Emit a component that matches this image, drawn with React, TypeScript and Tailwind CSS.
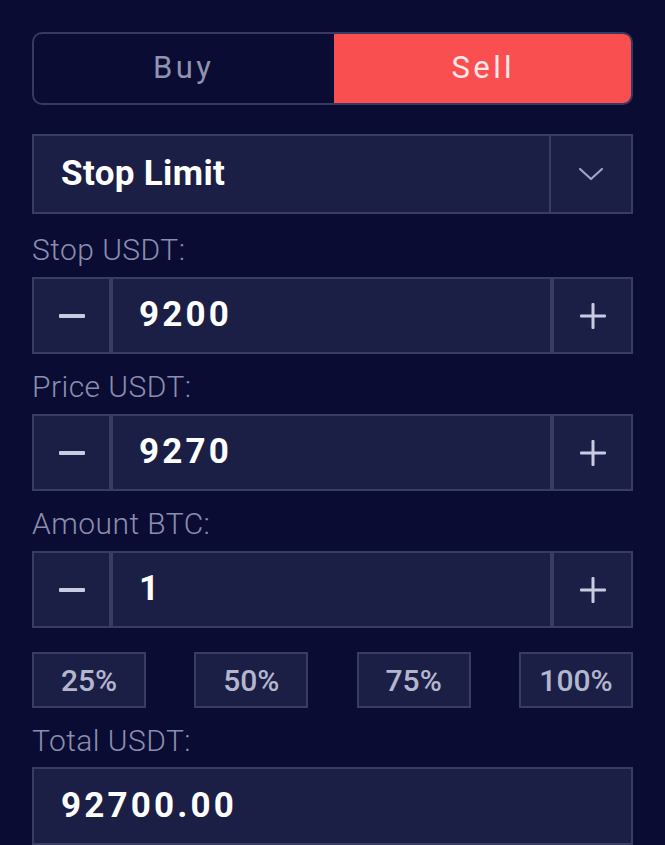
import React from "react";

const font = { fontFamily: "Roboto, 'Noto Sans', sans-serif" };

function Label({ text, first }: { text: string; first?: boolean }) {
  return (
    <div
      className={`${first ? "mt-[18px]" : "mt-[15px]"} mb-[9px] h-[36px] text-[30px] font-light leading-[36px] tracking-[0.015em] text-[#8b8eae]`}
    >
      {text}
    </div>
  );
}

function Minus() {
  return (
    <svg width="28" height="6" viewBox="0 0 28 6">
      <rect x="1" y="1" width="26" height="4" rx="1" fill="#c9cbe2" />
    </svg>
  );
}

function Plus() {
  return (
    <svg width="28" height="28" viewBox="0 0 28 28">
      <rect x="1" y="12.5" width="26" height="3" rx="1" fill="#c9cbe2" />
      <rect x="12.5" y="1" width="3" height="26" rx="1" fill="#c9cbe2" />
    </svg>
  );
}

function Stepper({ value }: { value: string }) {
  return (
    <div className="flex h-[77px]">
      <button className="flex w-[79px] shrink-0 items-center justify-center border-2 border-[#3a3d62] bg-[#1c1f45]">
        <Minus />
      </button>
      <div className="flex flex-1 items-center border-2 border-[#3a3d62] bg-[#1c1f45] pl-[26px] text-[35px] font-bold tracking-[0.09em] text-white">
        {value}
      </div>
      <button className="flex w-[81px] shrink-0 items-center justify-center border-2 border-[#3a3d62] bg-[#1c1f45]">
        <Plus />
      </button>
    </div>
  );
}

export default function App() {
  return (
    <div className="min-h-[845px] bg-[#0a0c33] px-8 pt-8" style={font}>
      <div className="flex h-[73px] overflow-hidden rounded-[10px] border-2 border-[#363a5e]">
        <button className="flex flex-1 items-center justify-center text-[31px] tracking-[0.11em] text-[#8f92b0]">
          Buy
        </button>
        <button className="-my-[2px] -mr-[2px] flex flex-1 items-center justify-center rounded-r-[10px] bg-[#fa4f51] text-[31px] tracking-[0.11em] text-[#fde8ea]">
          Sell
        </button>
      </div>

      <div className="mt-[29px] flex h-[80px] border-2 border-[#3a3d62] bg-[#1c1f45]">
        <div className="flex flex-1 items-center pl-[27px] text-[35px] font-bold tracking-[0.01em] text-white">
          Stop Limit
        </div>
        <div className="flex w-[82px] items-center justify-center border-l-2 border-[#3a3d62]">
          <svg width="26" height="14" viewBox="0 0 26 14" fill="none">
            <path
              d="M2 2 L13 12 L24 2"
              stroke="#a0a3c2"
              strokeWidth="2.2"
              strokeLinecap="round"
              strokeLinejoin="round"
            />
          </svg>
        </div>
      </div>

      <Label text="Stop USDT:" first />
      <Stepper value="9200" />

      <Label text="Price USDT:" />
      <Stepper value="9270" />

      <Label text="Amount BTC:" />
      <Stepper value="1" />

      <div className="mt-[24px] flex justify-between">
        {["25%", "50%", "75%", "100%"].map((p) => (
          <button
            key={p}
            className="flex h-[56px] w-[114px] items-center justify-center border-2 border-[#3a3d62] bg-[#1c1f45] text-[30px] font-medium text-[#b4b6cf]"
          >
            {p}
          </button>
        ))}
      </div>

      <div className="mt-[15px] mb-[8px] h-[36px] text-[30px] font-light leading-[36px] tracking-[0.015em] text-[#8b8eae]">
        Total USDT:
      </div>
      <div className="flex h-[78px] items-center border-2 border-[#3a3d62] bg-[#1c1f45] pl-[27px] text-[35px] font-bold tracking-[0.09em] text-white">
        92700.00
      </div>
    </div>
  );
}
